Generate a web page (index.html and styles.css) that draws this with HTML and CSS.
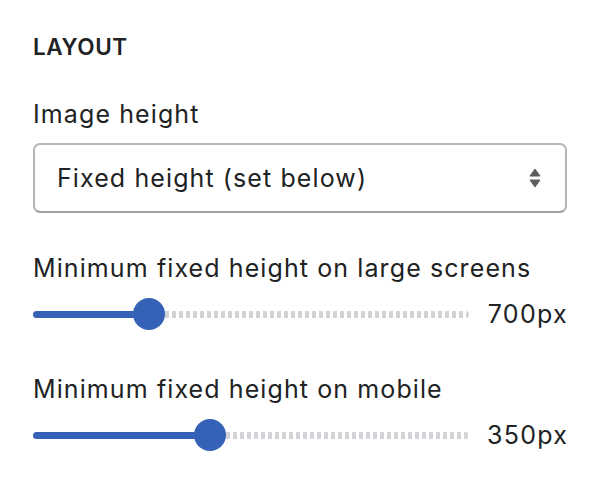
FILE: index.html
```html
<!DOCTYPE html>
<html lang="en">
<head>
<meta charset="utf-8">
<title>Layout settings</title>
<link rel="stylesheet" href="styles.css">
</head>
<body>
<section class="panel">
  <h2 class="heading">LAYOUT</h2>

  <div class="field">
    <label class="label">Image height</label>
    <div class="select">
      <span class="select-text">Fixed height (set below)</span>
      <span class="select-arrows">
        <svg width="12" height="22" viewBox="0 0 12 22" aria-hidden="true">
          <path d="M6 2 L11 9 L1 9 Z" fill="#5c5f62" stroke="#5c5f62" stroke-width="1" stroke-linejoin="round"/>
          <path d="M1 13 L11 13 L6 20 Z" fill="#5c5f62" stroke="#5c5f62" stroke-width="1" stroke-linejoin="round"/>
        </svg>
      </span>
    </div>
  </div>

  <div class="field field-range">
    <label class="label">Minimum fixed height on large screens</label>
    <div class="range">
      <div class="track">
        <div class="fill" style="width: 116px"></div>
        <div class="thumb"></div>
        <div class="rest"></div>
      </div>
      <span class="value">700px</span>
    </div>
  </div>

  <div class="field field-range">
    <label class="label">Minimum fixed height on mobile</label>
    <div class="range">
      <div class="track">
        <div class="fill" style="width: 177px"></div>
        <div class="thumb"></div>
        <div class="rest"></div>
      </div>
      <span class="value">350px</span>
    </div>
  </div>
</section>
</body>
</html>
```

FILE: styles.css
```css
* {
  box-sizing: border-box;
}

html, body {
  margin: 0;
  padding: 0;
  background: #ffffff;
}

body {
  font-family: Inter, "Liberation Sans", sans-serif;
  color: #202223;
}

.panel {
  padding: 33px 31px 0 33px;
  display: flex;
  flex-direction: column;
}

.heading {
  margin: 0;
  font-size: 22.5px;
  line-height: 28px;
  font-weight: 600;
  letter-spacing: 0.6px;
}

.field {
  display: flex;
  flex-direction: column;
  margin-top: 37px;
}

.field-range {
  margin-top: 39px;
}

.field-range + .field-range {
  margin-top: 43px;
}

.label {
  font-size: 25px;
  line-height: 32px;
  font-weight: 400;
  letter-spacing: 1.1px;
}

.select {
  margin-top: 13px;
  height: 70px;
  border: 2px solid #b3b7bc;
  border-bottom-color: #9ea2a7;
  border-radius: 7px;
  display: flex;
  align-items: center;
  justify-content: space-between;
  padding: 0 24px 0 22px;
  background: #fff;
}

.select-text {
  font-size: 25px;
  line-height: 32px;
  letter-spacing: 1.1px;
}

.select-arrows {
  display: flex;
}

.range {
  margin-top: 14px;
  display: flex;
  align-items: center;
  height: 32px;
}

.track {
  flex: 1;
  display: flex;
  align-items: center;
  height: 32px;
}

.fill {
  height: 7px;
  background: #3562b7;
  border-radius: 4px 0 0 4px;
  margin-right: -16px;
}

.thumb {
  width: 32px;
  height: 32px;
  border-radius: 50%;
  background: #3562b7;
  flex: none;
  position: relative;
  z-index: 1;
}

.rest {
  flex: 1;
  height: 7px;
  border-radius: 0 4px 4px 0;
  background: repeating-linear-gradient(
    to right,
    #d2d4d8 0,
    #d2d4d8 4px,
    transparent 4px,
    transparent 7px
  );
}

.value {
  margin-left: 18px;
  margin-right: -1px;
  font-size: 25px;
  line-height: 32px;
  letter-spacing: 1.3px;
  width: 81px;
  text-align: right;
}
```
